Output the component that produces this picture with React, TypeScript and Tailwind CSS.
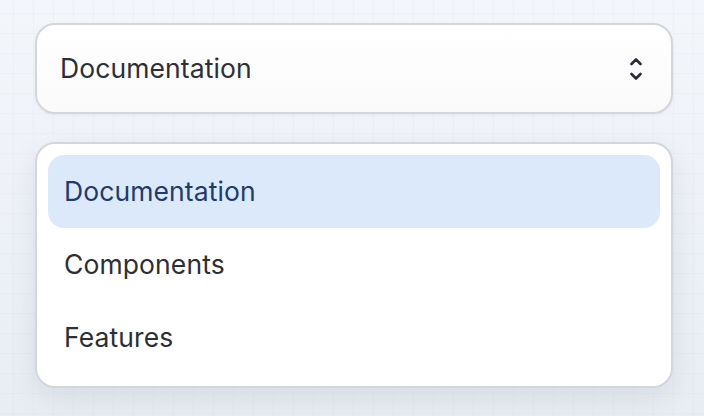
import React from "react";

function UpDown() {
  return (
    <svg width="12" height="22" viewBox="0 0 12 22" fill="none" className="shrink-0">
      <path d="M1.5 6 L6 1.5 L10.5 6" stroke="#2a2d33" strokeWidth="2.6" strokeLinecap="round" strokeLinejoin="round" />
      <path d="M1.5 16 L6 20.5 L10.5 16" stroke="#2a2d33" strokeWidth="2.6" strokeLinecap="round" strokeLinejoin="round" />
    </svg>
  );
}

export default function App() {
  const items = ["Documentation", "Components", "Features"];
  return (
    <div className="w-[704px] h-[416px] overflow-hidden bg-gradient-to-b from-[#f3f6fb] to-[#e8edf4]" style={{ fontFamily: "Inter, 'Noto Sans', sans-serif" }}>
      <div className="w-full h-full bg-[linear-gradient(to_right,rgba(148,163,184,0.05)_1px,transparent_1px),linear-gradient(to_bottom,rgba(148,163,184,0.05)_1px,transparent_1px)] bg-[size:20px_20px] bg-[position:13px_13px] pl-[35px] pr-[31px] pt-[23px] flex flex-col gap-[28px]">
        <button className="h-[91px] w-full rounded-[20px] border-2 border-[#d3d6db] bg-gradient-to-b from-white to-[#fafafa] shadow-[0_1px_3px_rgba(15,23,42,0.06)] flex items-center justify-between pl-[23px] pr-[29px] text-left">
          <span className="text-[26.5px] text-[#2c2f35] tracking-[0.1px]">Documentation</span>
          <UpDown />
        </button>
        <div className="h-[246px] w-full rounded-[20px] border-2 border-[#d3d6db] bg-white shadow-[0_10px_30px_rgba(15,23,42,0.08)] p-[11px] flex flex-col">
          {items.map((it, i) => (
            <div
              key={it}
              className={
                i === 0
                  ? "h-[73px] shrink-0 rounded-[16px] bg-[#dce9fb] flex items-center px-[16px] text-[26.5px] text-[#1f3a6c] tracking-[0.1px]"
                  : "h-[73px] shrink-0 rounded-[16px] flex items-center px-[16px] text-[26.5px] text-[#2c2f35] tracking-[0.1px]"
              }
            >
              {it}
            </div>
          ))}
        </div>
      </div>
    </div>
  );
}
